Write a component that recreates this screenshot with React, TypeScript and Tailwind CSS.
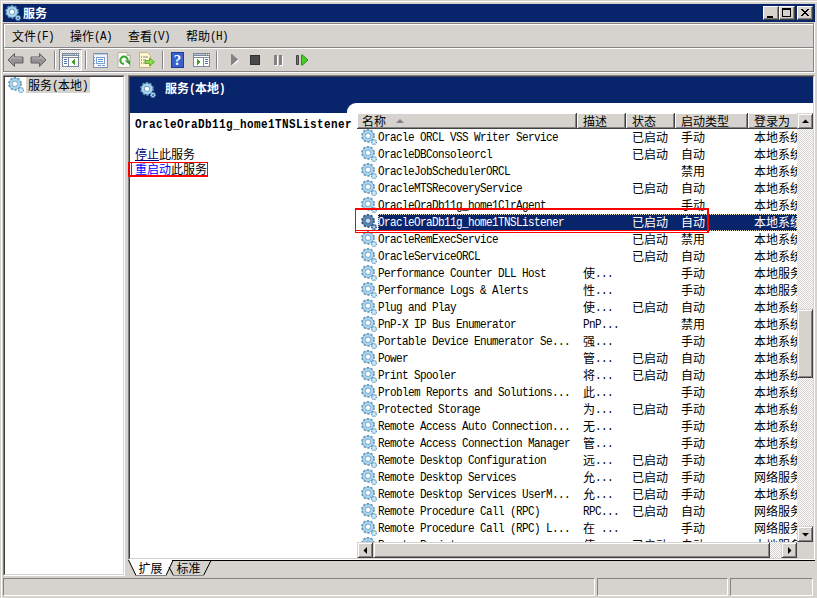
import React from 'react';

const rows: [string, string, string, string, string][] = [
  ['Oracle ORCL VSS Writer Service', '', '已启动', '手动', '本地系统'],
  ['OracleDBConsoleorcl', '', '已启动', '自动', '本地系统'],
  ['OracleJobSchedulerORCL', '', '', '禁用', '本地系统'],
  ['OracleMTSRecoveryService', '', '已启动', '自动', '本地系统'],
  ['OracleOraDb11g_home1ClrAgent', '', '', '手动', '本地系统'],
  ['OracleOraDb11g_home1TNSListener', '', '已启动', '自动', '本地系统'],
  ['OracleRemExecService', '', '已启动', '禁用', '本地系统'],
  ['OracleServiceORCL', '', '已启动', '自动', '本地系统'],
  ['Performance Counter DLL Host', '使...', '', '手动', '本地服务'],
  ['Performance Logs & Alerts', '性...', '', '手动', '本地服务'],
  ['Plug and Play', '使...', '已启动', '自动', '本地系统'],
  ['PnP-X IP Bus Enumerator', 'PnP...', '', '禁用', '本地系统'],
  ['Portable Device Enumerator Se...', '强...', '', '手动', '本地系统'],
  ['Power', '管...', '已启动', '自动', '本地系统'],
  ['Print Spooler', '将...', '已启动', '自动', '本地系统'],
  ['Problem Reports and Solutions...', '此...', '', '手动', '本地系统'],
  ['Protected Storage', '为...', '已启动', '手动', '本地系统'],
  ['Remote Access Auto Connection...', '无...', '', '手动', '本地系统'],
  ['Remote Access Connection Manager', '管...', '', '手动', '本地系统'],
  ['Remote Desktop Configuration', '远...', '已启动', '手动', '本地系统'],
  ['Remote Desktop Services', '允...', '已启动', '手动', '网络服务'],
  ['Remote Desktop Services UserM...', '允...', '已启动', '手动', '本地系统'],
  ['Remote Procedure Call (RPC)', 'RPC...', '已启动', '自动', '网络服务'],
  ['Remote Procedure Call (RPC) L...', '在 ...', '', '手动', '网络服务'],
  ['Remote Registry', '使...', '已启动', '自动', '本地服务'],
];

const SELECTED = 5;

const raised = 'bg-[#d6d3ce] border border-t-[#d6d3ce] border-l-[#d6d3ce] border-r-[#424142] border-b-[#424142] shadow-[inset_1px_1px_0_#fff,inset_-1px_-1px_0_#848284]';
const dither = 'bg-[conic-gradient(#fff_25%,#d6d3ce_0_50%,#fff_0_75%,#d6d3ce_0)] bg-[length:2px_2px]';

// Latin runs take half the advance of a Chinese character
const Text: React.FC<{ children: string }> = ({ children }) => (
  <>
    {children.split(/([\x20-\x7e]+)/).filter(Boolean).map((part, i) =>
      /^[\x20-\x7e]/.test(part) ? (
        <span key={i} className="inline-block -translate-y-px scale-y-112 whitespace-pre font-['Liberation_Mono',monospace] text-[11px] tracking-[-0.6px]">{part}</span>
      ) : (
        <span key={i}>{part}</span>
      )
    )}
  </>
);

const Gear: React.FC<{ className?: string; dark?: boolean }> = ({ className = '', dark }) => {
  const edge = dark ? '#2c5482' : '#6496b8';
  const body = dark ? '#5b87b5' : '#a8d6f2';
  return (
    <svg viewBox="0 0 16 16" className={`h-4 w-4 shrink-0 ${className}`} fill="none">
      <circle cx="7" cy="6.800" r="6" stroke={edge} strokeWidth="1.800" strokeDasharray="2.200 1.570" />
      <circle cx="7" cy="6.800" r="4.200" stroke={edge} strokeWidth="3.400" />
      <circle cx="7" cy="6.800" r="4.200" stroke={body} strokeWidth="2.400" />
      <circle cx="7" cy="6.800" r="2.600" fill={dark ? '#c8dcee' : '#fff'} stroke={edge} strokeWidth=".6" />
      <circle cx="13" cy="13" r="2.200" stroke={edge} strokeWidth="1.700" strokeDasharray="1.100 .630" />
      <circle cx="13" cy="13" r="1.500" stroke={body} strokeWidth="1.300" />
    </svg>
  );
};

const Arrow: React.FC<{ flip?: boolean }> = ({ flip }) => (
  <svg viewBox="0 0 17 16" className={`h-4 w-[17px] ${flip ? '-scale-x-100' : ''}`}>
    <path d="M1 8 7.500 1.500V5H16v6H7.500v3.500z" fill="#949294" stroke="#636163" />
    <path d="M3 8 6.500 4.500V6H15" fill="none" stroke="#bdbabd" />
  </svg>
);

const Pane: React.FC<{ flip?: boolean }> = ({ flip }) => (
  <svg viewBox="0 0 17 14" className="h-3.5 w-[17px]" shapeRendering="crispEdges">
    <path d="M0 0h17v14H0z" fill="#7b8a9c" />
    <path d="M1 3h15v1H1zM1 5h15v8H1z" fill="#fff" />
    <path d="M1 1h11v1H1z" fill="#b5c3d6" />
    <path d="M13 1h1v1h-1zM15 1h1v1h-1z" fill="#fff" />
    {flip ? (
      <>
        <path d="M10 5h1v8h-1z" fill="#7b8a9c" />
        <path d="M12 6h3v1h-3zM12 8h3v1h-3zM12 10h3v1h-3z" fill="#4a75ad" />
        <path d="M4 6v6l4-3z" fill="#42a221" />
      </>
    ) : (
      <>
        <path d="M6 5h1v8H6z" fill="#7b8a9c" />
        <path d="M2 6h3v1H2zM2 8h3v1H2zM2 10h3v1H2z" fill="#4a75ad" />
        <path d="M13 6v6L9 9z" fill="#42a221" />
      </>
    )}
  </svg>
);

const Divider: React.FC<{ className: string }> = ({ className }) => (
  <div className={`h-[18px] w-0.5 shrink-0 border-l border-[#848284] bg-white ${className}`} />
);

const Toolbar: React.FC = () => (
  <div className="flex h-[23px] items-center border-t border-white pl-[3px]">
    <Arrow />
    <span className="w-1.5" />
    <Arrow flip />
    <Divider className="ml-[7px]" />
    <div className={`ml-[3px] flex h-[22px] w-[23px] items-center justify-center border border-t-[#848284] border-l-[#848284] border-r-white border-b-white ${dither}`}>
      <Pane />
    </div>
    <Divider className="ml-[3px]" />
    <svg viewBox="0 0 16 16" className="ml-[5px] h-4 w-4" shapeRendering="crispEdges">
      <path d="M1 1h14v14H1z" fill="#f4f6fa" stroke="#7b92b5" />
      <path d="M1 2h14v1H1z" fill="#bdcbe0" />
      <path d="M4.500 5.500h8v6h-8z" fill="#fff" stroke="#7ba2ce" />
      <path d="M6 7h5v1H6zM6 9h5v1H6zM6 13h3v1H6zM10 13h3v1h-3zM2 5h1v1H2zM2 8h1v1H2zM2 11h1v1H2z" fill="#6b9ace" />
    </svg>
    <svg viewBox="0 0 14 16" className="ml-[9px] h-4 w-3.5">
      <path d="M1 .5h9l3 3v12H1z" fill="#fbfbf6" stroke="#b5b29c" />
      <path d="M10 .5v3h3" fill="none" stroke="#b5b29c" />
      <path d="M7 12A3.700 3.700 0 1 1 10.700 8.500" fill="none" stroke="#31a631" strokeWidth="2" />
      <path d="M7.500 8.500h5.500v4.500z" fill="#319a31" />
    </svg>
    <svg viewBox="0 0 16 16" className="ml-2 h-4 w-4">
      <path d="M.5.5h8l3 3v12H.5z" fill="#fff7d0" stroke="#c6b284" />
      <path d="M2 5h1M2 8h1M2 11h1" stroke="#555" />
      <path d="M4 5h5M4 8h3M4 11h3" stroke="#8c8a84" />
      <path d="M6 8.500h4.500V6l5 4-5 4v-2.500H6z" fill="#8cd94a" stroke="#52a221" strokeWidth=".8" />
    </svg>
    <Divider className="ml-[7px]" />
    <div className="ml-[7px] flex h-4 w-[13px] items-center justify-center border border-[#213c94] bg-[#3961ce] font-['Liberation_Serif',serif] text-[15px] leading-none font-bold text-white">?</div>
    <span className="w-[9px]" />
    <Pane flip />
    <Divider className="ml-1.5" />
    <svg viewBox="0 0 10 12" className="ml-3 h-3 w-2.5">
      <path d="M2 1v11l7-5z" fill="#fff" />
      <path d="M1 0v11h1l6-5.500L2 0z" fill="#848284" />
    </svg>
    <div className="ml-2.5 h-2.5 w-2.5 border border-[#313031] bg-[#4a494a]" />
    <div className="ml-[14px] flex gap-0.5">
      <i className="h-2.5 w-[3px] bg-[#848284] shadow-[1px_1px_0_#fff]" />
      <i className="h-2.5 w-[3px] bg-[#848284] shadow-[1px_1px_0_#fff]" />
    </div>
    <svg viewBox="0 0 13 12" className="ml-[14px] h-3 w-[13px]">
      <path d="M.5 1.500h2v9h-2z" fill="#7b797b" stroke="#424142" />
      <path d="M5.500 1v10h1l5.500-5-5.500-5z" fill="#4acb29" stroke="#219210" />
    </svg>
  </div>
);

const tri = {
  up: 'M4 6h7L7.500 2.500z',
  down: 'M4 3h7L7.500 6.500z',
  left: 'M9 1v7L5.500 4.500z',
  right: 'M6 1v7l3.500-3.500z',
};

const ScrollButton: React.FC<{ dir: keyof typeof tri }> = ({ dir }) => (
  <div className={`flex h-4 w-4 shrink-0 items-center justify-center ${raised}`}>
    <svg viewBox="0 0 15 9" className="h-[9px] w-[15px] shrink-0"><path d={tri[dir]} /></svg>
  </div>
);

const caption = [
  <path key="a" d="M3 9h6v2H3z" />,
  <path key="b" d="M2 1h9v9H2zM3 3v6h7V3z" fillRule="evenodd" />,
  <path key="c" d="M3 2h2v1h1v1h2V3h1V2h2v1h-1v1H9v1H8v1h1v1h1v1h1v1H9V8H8V7H6v1H5v1H3V8h1V7h1V6h1V5H5V4H4V3H3z" />,
];

const cols = ['w-[220px] pl-[5px]', 'w-[49px] pl-1.5', 'w-[49px] pl-1.5', 'w-[73px] pl-1.5', 'w-[49px] pl-1.5'];

const ServiceList: React.FC = () => (
  <div className="flex h-[445px] w-[456px] shrink-0 flex-col">
    <div className="flex h-[429px]">
      <div className="w-[440px] overflow-hidden">
        <div className="flex h-4">
          {['名称', '描述', '状态', '启动类型', '登录为'].map((name, i) => (
            <div key={name} className={`flex shrink-0 items-center whitespace-nowrap ${cols[i]} border-b border-b-[#424142] bg-[#d6d3ce] ${i < 4 ? 'border-r border-r-[#424142] shadow-[inset_1px_1px_0_#fff,inset_-1px_-1px_0_#848284]' : 'shadow-[inset_1px_1px_0_#fff,inset_0_-1px_0_#848284]'}`}>
              {name}
              {i === 0 && <svg viewBox="0 0 8 4" className="ml-2.5 h-1 w-2"><path d="M0 4h8L4 0z" fill="#848284" /></svg>}
            </div>
          ))}
        </div>
        {rows.map((row, r) => (
          <div key={r} className={`flex h-[17px] whitespace-nowrap leading-[15px] ${r === SELECTED ? 'text-white' : ''}`}>
            <div className="flex w-[21px] shrink-0 justify-end pr-px">
              <Gear dark={r === SELECTED} />
            </div>
            <div className={`flex h-[17px] flex-1 ${r === SELECTED ? 'bg-[#08246b] outline-1 -outline-offset-1 outline-dotted outline-[#e8dcb0]' : ''}`}>
              <div className="w-[199px] shrink-0"><Text>{row[0]}</Text></div>
              {row.slice(1).map((cell, i) => (
                <div key={i} className={`shrink-0 ${cols[i + 1]}`}><Text>{cell}</Text></div>
              ))}
            </div>
          </div>
        ))}
      </div>
      <div className={`flex w-4 flex-col ${dither}`}>
        <ScrollButton dir="up" />
        <div className={`mt-[180px] h-[69px] ${raised}`} />
        <div className="flex-1" />
        <ScrollButton dir="down" />
      </div>
    </div>
    <div className="flex h-4 bg-[#d6d3ce]">
      <ScrollButton dir="left" />
      <div className={`w-[397px] ${raised}`} />
      <div className={`w-[11px] ${dither}`} />
      <ScrollButton dir="right" />
    </div>
  </div>
);

const App: React.FC = () => (
  <div className="relative flex h-[598px] w-[817px] flex-col overflow-hidden bg-[#d6d3ce] pt-px pl-px font-['Noto_Sans_CJK_SC',sans-serif] text-[12px] leading-[14px] text-black">
    <div className="flex h-[597px] flex-col border-t border-l border-white pt-0.5 pl-px">
      <div className="flex h-[18px] w-[812px] shrink-0 items-center bg-[#08246b] pl-0.5">
        <Gear />
        <span className="ml-0.5 flex-1 font-bold text-white">服务</span>
        {caption.map((icon, i) => (
          <div key={i} className={`h-3.5 ${i === 2 ? 'ml-0.5' : ''} w-4 border border-t-white border-l-white border-r-[#424142] border-b-[#424142] bg-[#d6d3ce] shadow-[inset_-1px_-1px_0_#848284]`}>
            <svg viewBox="0 0 14 12" className="h-3 w-3.5" shapeRendering="crispEdges">{icon}</svg>
          </div>
        ))}
        <span className="w-0.5" />
      </div>

      <div className="mt-px h-[50px] w-[812px] shrink-0 border-r border-b border-white">
        <div className="h-[49px] w-[811px] border border-[#848284]">
          <div className="flex h-[24px] items-center border-t border-l border-b border-t-white border-l-white border-b-[#848284] pt-px pl-[7px]">
            {['文件(F)', '操作(A)', '查看(V)', '帮助(H)'].map((m) => (
              <span key={m} className="w-[58px]"><Text>{m}</Text></span>
            ))}
          </div>
          <Toolbar />
        </div>
      </div>

      <div className="mt-0.5 flex h-[501px] w-[812px] shrink-0 gap-[3px]">
        <div className="h-[501px] w-[122px] shrink-0 border border-t-[#848284] border-l-[#848284] border-r-white border-b-white">
          <div className="h-[499px] w-[120px] border border-t-[#424142] border-l-[#424142] border-r-[#d6d3ce] border-b-[#d6d3ce] bg-white">
            <div className="flex items-center pl-[3px]">
              <Gear />
              <span className="ml-0.5 h-4 bg-[#d6d3ce] px-0.5 leading-4"><Text>服务(本地)</Text></span>
            </div>
          </div>
        </div>

        <div className="flex w-[687px] flex-col">
          <div className="h-[485px] w-[687px] shrink-0 border border-t-[#848284] border-l-[#848284] border-r-white border-b-white">
            <div className="h-[483px] w-[685px] border border-t-[#424142] border-l-[#424142] border-r-[#d6d3ce] border-b-[#d6d3ce] bg-white">
              <div className="flex h-[36px] flex-col bg-[#08246b]">
                <div className="flex h-[26px] items-center pl-[10px]">
                  <Gear />
                  <span className="ml-[9px] pb-[3px] font-bold text-white"><Text>服务(本地)</Text></span>
                </div>
                <div className="ml-[217px] h-[10px] rounded-tl-[9px] bg-white" />
              </div>
              <div className="flex">
                <div className="w-[227px] shrink-0 pt-[5px] pl-[5px]">
                  <div className="scale-y-112 font-['Liberation_Mono',monospace] text-[11px] font-bold tracking-[0.4px] whitespace-nowrap">OracleOraDb11g_home1TNSListener</div>
                  <div className="mt-[15px] flex h-[15px] leading-[13px]"><span className="h-[14px] border-b border-[#000084] text-[#000084]">停止</span>此服务</div>
                  <div className="relative flex h-[15px] leading-[13px]"><span className="h-[14px] border-b border-[#0000ff] text-[#0000ff]">重启动</span>此服务
                    <div className="absolute top-0 -left-[7px] h-[15px] w-[80px] border border-b-2 border-[#ff0000]"><i className="block h-full w-[3px] border-r border-[#ff0000]" /></div>
                  </div>
                </div>
                <ServiceList />
              </div>
            </div>
          </div>
          <svg viewBox="0 0 687 17" className="h-[17px] w-[687px] shrink-0">
            <path d="M1 0 8.500 15.500h29L45 0z" fill="#fff" />
            <path d="M44 .5h643" stroke="#000" />
            <path d="M.5 0 8 15.500M38 15.500 45 .5M41 7l4.500 8.500M75.500 15.500 83 .5" stroke="#000" fill="none" />
            <path d="M8 15.500h30M45 15.500h31" stroke="#848284" />
            <text x="10.500" y="12.500" fontSize="12">扩展</text>
            <text x="48.500" y="12.500" fontSize="12">标准</text>
          </svg>
        </div>
      </div>

      <div className="mt-0.5 flex h-[18px] w-[812px] shrink-0 gap-0.5">
        {['w-[592px]', 'w-[131px]', 'w-[83px]'].map((w) => (
          <div key={w} className={`${w} border border-t-[#848284] border-l-[#848284] border-r-white border-b-white`} />
        ))}
      </div>
    </div>

    {/* highlight around the selected service */}
    <div className="absolute top-[208px] left-[355px] h-[25px] w-[354px] border border-t-2 border-r-2 border-[#ff0000]">
      <div className="h-[21px] border-b border-[#ff0000]" />
    </div>
  </div>
);

export default App;
